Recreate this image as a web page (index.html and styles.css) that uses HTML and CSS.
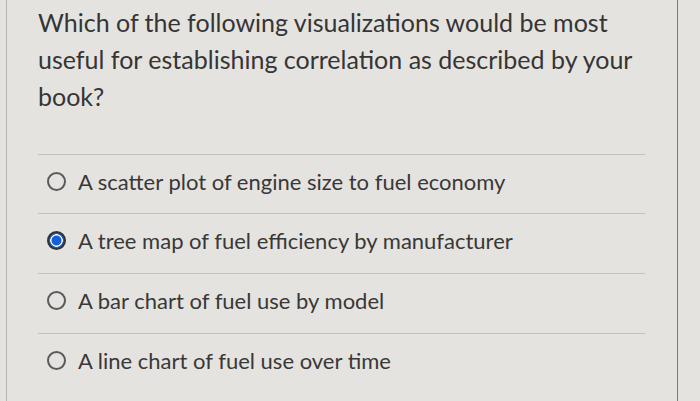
FILE: index.html
```html
<!DOCTYPE html>
<html>
<head>
<meta charset="utf-8">
<link rel="stylesheet" href="styles.css">
</head>
<body>
<div class="card">
  <div class="question">Which of the following visualizations would be most useful for establishing correlation as described by your book?</div>
  <ul class="answers">
    <li class="answer"><span class="radio"></span><span class="label">A scatter plot of engine size to fuel economy</span></li>
    <li class="answer"><span class="radio checked"></span><span class="label">A tree map of fuel efficiency by manufacturer</span></li>
    <li class="answer"><span class="radio"></span><span class="label">A bar chart of fuel use by model</span></li>
    <li class="answer"><span class="radio"></span><span class="label">A line chart of fuel use over time</span></li>
  </ul>
</div>
</body>
</html>
```
FILE: styles.css
```css
html, body {
  margin: 0;
  padding: 0;
  background: #e5e3df;
}
body {
  width: 700px;
  height: 401px;
  overflow: hidden;
  font-family: Lato, "Open Sans", sans-serif;
  color: #333333;
}
.card {
  margin-left: 6px;
  width: 672px;
  height: 401px;
  border-left: 1px solid #b8b6b2;
  border-right: 1px solid #7e7c79;
  box-sizing: border-box;
  padding: 4px 0 0 31px;
}
.question {
  font-size: 25px;
  line-height: 37px;
  width: 620px;
  color: #353535;
}
.answers {
  list-style: none;
  margin: 39px 0 0 0;
  padding: 0;
  width: 607px;
}
.answer {
  display: flex;
  align-items: center;
  gap: 12px;
  height: 59px;
  padding-bottom: 6px;
  box-sizing: border-box;
  border-top: 1px solid #c4c2be;
  padding-left: 9px;
  font-size: 22px;
  color: #383838;
}
.answer:nth-child(n+2) {
  height: 60px;
}
.radio {
  width: 19px;
  height: 19px;
  border: 2px solid #5a5a5a;
  border-radius: 50%;
  box-sizing: border-box;
  flex: none;
}
.radio.checked {
  border: 2px solid #333;
  background: radial-gradient(circle, #1a5fd0 0 4.5px, #ffffff 5.5px 6px, #1a5fd0 6.5px);
}
```
